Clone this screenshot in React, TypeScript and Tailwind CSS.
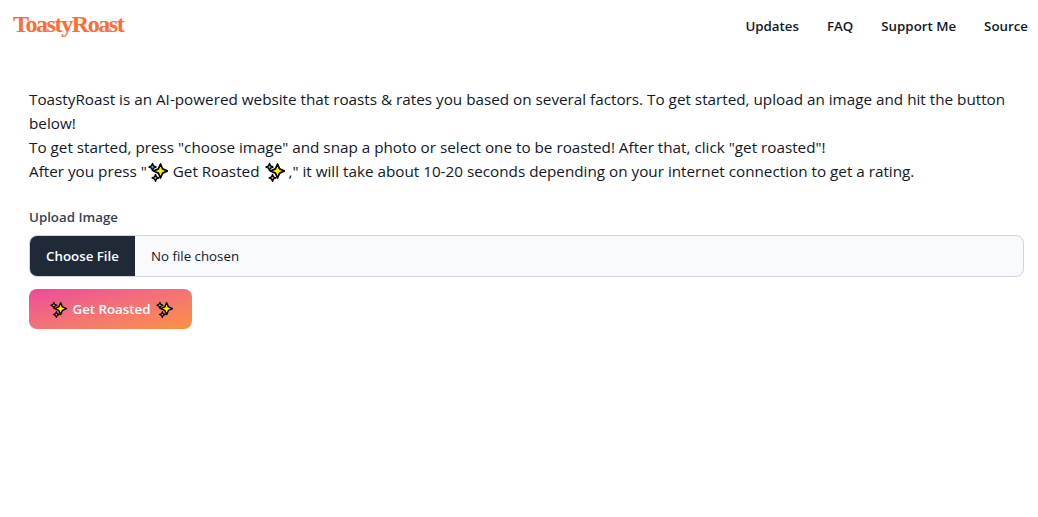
const FONT = "font-['Open_Sans','Noto_Sans',sans-serif]";

// Windows-style sparkles emoji, black outline with yellow, blue and pink stars
function Sparkles({ className }: { className?: string }) {
  return (
    <svg viewBox="0 0 20 20" className={className} aria-hidden="true">
      <path d="M4.5 1.5L5.6 3.9L8 5L5.6 6.1L4.5 8.5L3.4 6.1L1 5L3.4 3.9Z" fill="#3fb8e8" stroke="#000" strokeWidth="1.4" strokeLinejoin="round" />
      <path d="M7.5 12.5L8.5 14.9L10.9 15.9L8.5 16.9L7.5 19.3L6.5 16.9L4.1 15.9L6.5 14.9Z" fill="#f28ac0" stroke="#000" strokeWidth="1.4" strokeLinejoin="round" />
      <path d="M12.5 2L14.6 6.9L19.5 9L14.6 11.1L12.5 16L10.4 11.1L5.5 9L10.4 6.9Z" fill="#ffee00" stroke="#000" strokeWidth="1.7" strokeLinejoin="round" />
    </svg>
  );
}

const NAV_LINKS = ['Updates', 'FAQ', 'Support Me', 'Source'];

export default function App() {
  return (
    <div className={`min-h-screen bg-white text-[#111827] ${FONT}`}>
      <header className="flex items-start justify-between pl-[13px] pr-[10px] pt-[11px]">
        <span className="font-['Liberation_Serif',serif] text-[24px] leading-[26px] font-bold tracking-[-1.4px] text-[#ff6b35]">
          ToastyRoast
        </span>
        <nav className="flex gap-7 pt-[5px]">
          {NAV_LINKS.map((link) => (
            <a key={link} className="text-[13.3px] leading-5 font-semibold text-[#111827]">{link}</a>
          ))}
        </nav>
      </header>

      <main className="px-[29px] pt-[50px]">
        <div className="text-[15.25px] leading-6 text-[#111827]">
          <p>ToastyRoast is an AI-powered website that roasts &amp; rates you based on several factors. To get started, upload an image and hit the button below!</p>
          <p>To get started, press "choose image" and snap a photo or select one to be roasted! After that, click "get roasted"!</p>
          <p className="h-6">
            After you press "<Sparkles className="mx-px inline-block size-5 align-[-5px]" /> Get Roasted <Sparkles className="mr-[3px] ml-[2px] inline-block size-5 align-[-5px]" />," it will take about 10-20 seconds depending on your internet connection to get a rating.
          </p>
        </div>

        {/* Upload form */}
        <label className="mt-6 mb-2 block text-[13.3px] leading-5 font-semibold text-[#374151]">Upload Image</label>
        <div className="flex h-[42px] w-[995px] items-center overflow-hidden rounded-lg border border-[#d1d5db] bg-[#f9fafb]">
          <span className="flex h-full w-[105px] items-center justify-center bg-[#1f2937] pt-px text-[13.3px] font-semibold text-white">Choose File</span>
          <span className="pt-px pl-4 text-[13.3px] text-[#111827]">No file chosen</span>
        </div>
        <button className="mt-3 flex h-10 w-[163px] items-center justify-center gap-[5px] rounded-lg bg-gradient-to-br from-[#ec4899] to-[#fb923c] text-[13.3px] font-semibold text-white">
          <Sparkles className="ml-[2px] size-[17px]" />
          <span className="pt-px">Get Roasted</span>
          <Sparkles className="size-[17px]" />
        </button>
      </main>
    </div>
  );
}
